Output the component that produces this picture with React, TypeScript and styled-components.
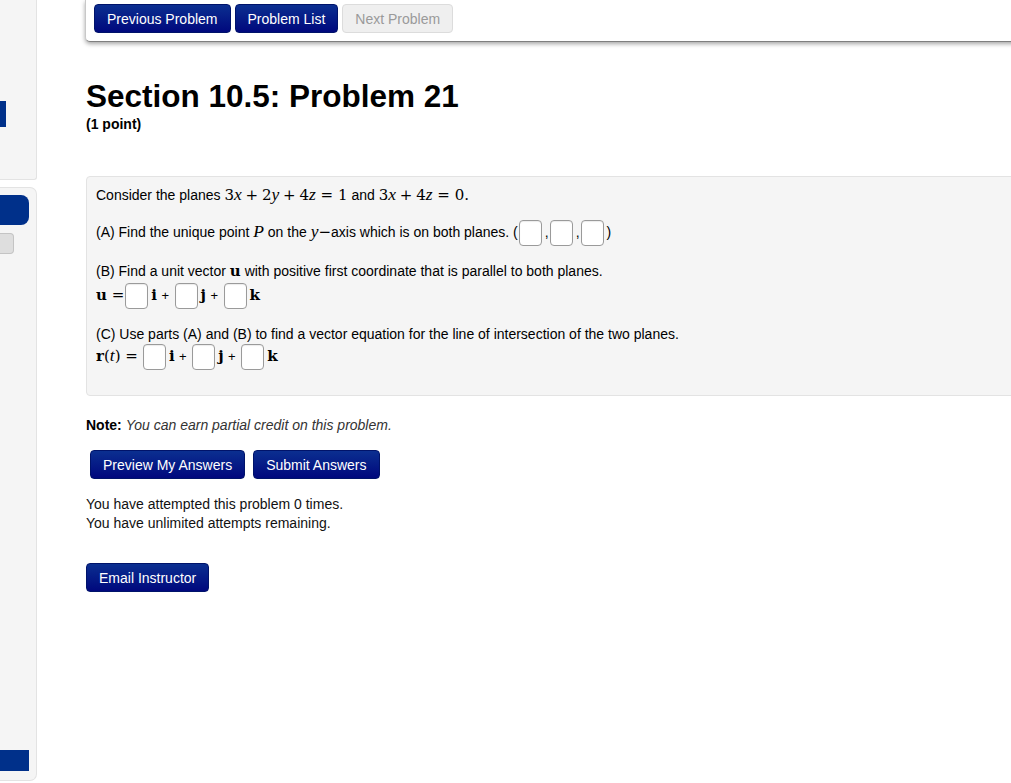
import React from "react";
import styled, { createGlobalStyle, css } from "styled-components";

const GlobalStyle = createGlobalStyle`
  html, body { margin: 0; padding: 0; background: #fff; overflow: hidden; }
  body {
    font-family: "Liberation Sans", Arial, sans-serif;
    font-size: 14px;
    line-height: 20px;
    color: #000;
  }
`;

const Page = styled.div`
  display: flex;
  width: 1011px;
  height: 783px;
  overflow: hidden;
`;

/* ---------- left sidebar (clipped) ---------- */
const Sidebar = styled.aside`
  flex: none;
  width: 37px;
  display: flex;
  flex-direction: column;
`;

const SideTop = styled.div`
  flex: none;
  height: 180px;
  box-sizing: border-box;
  padding-top: 101px;
  background: #f5f5f5;
  border-right: 1px solid #e3e3e3;
  border-bottom: 1px solid #e3e3e3;
  border-bottom-right-radius: 3px;
`;

const SideMark = styled.div`
  width: 6px;
  height: 26px;
  background: #00308a;
`;

const SideNav = styled.div`
  flex: 1;
  margin: 7px 0 2px;
  box-sizing: border-box;
  padding-top: 7px;
  display: flex;
  flex-direction: column;
  background: #f5f5f5;
  border: 1px solid #e3e3e3;
  border-left: none;
  border-radius: 0 7px 7px 0;
`;

const SidePill = styled.div`
  width: 29px;
  height: 30px;
  background: #00308a;
  border-radius: 0 8px 8px 0;
`;

const SideTab = styled.div`
  width: 14px;
  height: 21px;
  margin-top: 8px;
  box-sizing: border-box;
  background: #dedede;
  border: 1px solid #c4c4c4;
  border-left: none;
  border-radius: 0 4px 4px 0;
`;

const SideFoot = styled.div`
  margin-top: auto;
  margin-bottom: 9px;
  width: 29px;
  height: 21px;
  background: #00308a;
`;

/* ---------- main column ---------- */
const Main = styled.main`
  flex: none;
  width: 960px;
  margin-left: 49px;
`;

const NavBar = styled.nav`
  margin-left: -1px;
  display: flex;
  gap: 4px;
  padding: 4px 0 8px 8px;
  background: #fff;
  border-left: 1px solid #c8c8c8;
  border-bottom: 1px solid #7f7f7f;
  border-bottom-left-radius: 5px;
  box-shadow: 0 2px 4px rgba(0, 0, 0, 0.35);
`;

const Btn = styled.button<{ $off?: boolean }>`
  font-family: "Liberation Sans", Arial, sans-serif;
  font-size: 14px;
  line-height: 19px;
  padding: 5px 12px 3px;
  margin: 0;
  border-radius: 4px;
  border: 1px solid #00136a;
  color: #fff;
  background: linear-gradient(to bottom, #0b2f90 0%, #00087d 100%);
  cursor: pointer;
  ${(p) =>
    p.$off &&
    css`
      color: #9a9a9a;
      background: #efefef;
      border-color: #dcdcdc;
      cursor: default;
    `}
`;

const Title = styled.h2`
  margin: 37px 0 0;
  font-size: 31.5px;
  line-height: 35px;
  font-weight: bold;
  color: #000;
`;

const Points = styled.div`
  font-size: 14px;
  line-height: 20px;
  font-weight: bold;
`;

const ProblemBox = styled.div`
  margin-top: 42px;
  padding: 8px 9px 25px;
  background: #f5f5f5;
  border: 1px solid #e3e3e3;
  border-radius: 4px;
`;

const Line = styled.div<{ $gap?: number }>`
  margin-top: ${(p) => p.$gap ?? 0}px;
  line-height: 20px;
  white-space: nowrap;
`;

/* math */
const M = styled.span`
  font-family: "DejaVu Serif", "Liberation Serif", serif;
  font-size: 15px;
  line-height: 1;
  white-space: nowrap;
  color: #000;
`;
const MI = styled.span`
  font-family: "Liberation Serif", serif;
  font-style: italic;
  font-size: 17.5px;
`;
const MB = styled.span`
  font-weight: bold;
`;
const Bin = styled.span<{ $tight?: boolean }>`
  margin: 0 ${(p) => (p.$tight ? 0 : 3.8)}px;
`;
const Rel = styled.span<{ $trail?: number }>`
  margin: 0 ${(p) => p.$trail ?? 4.8}px 0 4.8px;
`;

const Blank = styled.input.attrs({ type: "text", readOnly: true })`
  box-sizing: border-box;
  width: 23px;
  height: 26px;
  margin: 0 3px 0 1px;
  padding: 0;
  vertical-align: middle;
  background: #fff;
  border: 1px solid #9a9a9a;
  border-radius: 4px;
  box-shadow: inset 0 1px 1px rgba(0, 0, 0, 0.08);
  outline: none;
`;

const Plus = styled.span`
  font-family: "Liberation Sans", Arial, sans-serif;
  font-size: 13px;
  margin: 0 4.5px;
`;

const Note = styled.div`
  margin-top: 19px;
  line-height: 20px;
  color: #222;
  b {
    color: #000;
  }
  i {
    color: #333;
  }
`;

const ActionRow = styled.div`
  margin-top: 15px;
  padding-left: 4px;
  display: flex;
  gap: 8px;
`;

const Attempts = styled.div`
  margin-top: 16px;
  line-height: 19px;
  color: #111;
`;

const EmailRow = styled.div`
  margin-top: 30px;
  display: flex;
`;

function VectorBlanks() {
  return (
    <>
      <Blank />
      <M>
        <MB>i</MB>
      </M>
      <Plus>+</Plus>
      <Blank />
      <M>
        <MB>j</MB>
      </M>
      <Plus>+</Plus>
      <Blank />
      <M>
        <MB>k</MB>
      </M>
    </>
  );
}

export default function App() {
  return (
    <>
      <GlobalStyle />
      <Page>
        <Sidebar>
          <SideTop>
            <SideMark />
          </SideTop>
          <SideNav>
            <SidePill />
            <SideTab />
            <SideFoot />
          </SideNav>
        </Sidebar>

        <Main>
          <NavBar>
            <Btn>Previous Problem</Btn>
            <Btn>Problem List</Btn>
            <Btn $off>Next Problem</Btn>
          </NavBar>

          <Title>Section 10.5: Problem 21</Title>
          <Points>(1 point)</Points>

          <ProblemBox>
            <Line>
              Consider the planes{" "}
              <M>
                3<MI>x</MI>
                <Bin>+</Bin>2<MI>y</MI>
                <Bin>+</Bin>4<MI>z</MI>
                <Rel>=</Rel>1
              </M>{" "}
              and{" "}
              <M>
                3<MI>x</MI>
                <Bin>+</Bin>4<MI>z</MI>
                <Rel>=</Rel>0.
              </M>
            </Line>

            <Line $gap={15}>
              (A) Find the unique point{" "}
              <M>
                <MI>P</MI>
              </M>{" "}
              on the{" "}
              <M>
                <MI>y</MI>
                <Bin $tight>−</Bin>
              </M>
              axis which is on both planes. (<Blank />,<Blank />,<Blank />)
            </Line>

            <Line $gap={15}>
              (B) Find a unit vector{" "}
              <M>
                <MB>u</MB>
              </M>{" "}
              with positive first coordinate that is parallel to both planes.
            </Line>
            <Line $gap={2}>
              <M>
                <MB>u</MB>
                <Rel $trail={0}>=</Rel>
              </M>
              <VectorBlanks />
            </Line>

            <Line $gap={15}>
              (C) Use parts (A) and (B) to find a vector equation for the line of
              intersection of the two planes.
            </Line>
            <Line>
              <M>
                <MB>r</MB>(<MI>t</MI>)<Rel $trail={4}>=</Rel>
              </M>
              <VectorBlanks />
            </Line>
          </ProblemBox>

          <Note>
            <b>Note:</b> <i>You can earn partial credit on this problem.</i>
          </Note>

          <ActionRow>
            <Btn>Preview My Answers</Btn>
            <Btn>Submit Answers</Btn>
          </ActionRow>

          <Attempts>
            You have attempted this problem 0 times.
            <br />
            You have unlimited attempts remaining.
          </Attempts>

          <EmailRow>
            <Btn>Email Instructor</Btn>
          </EmailRow>
        </Main>
      </Page>
    </>
  );
}
